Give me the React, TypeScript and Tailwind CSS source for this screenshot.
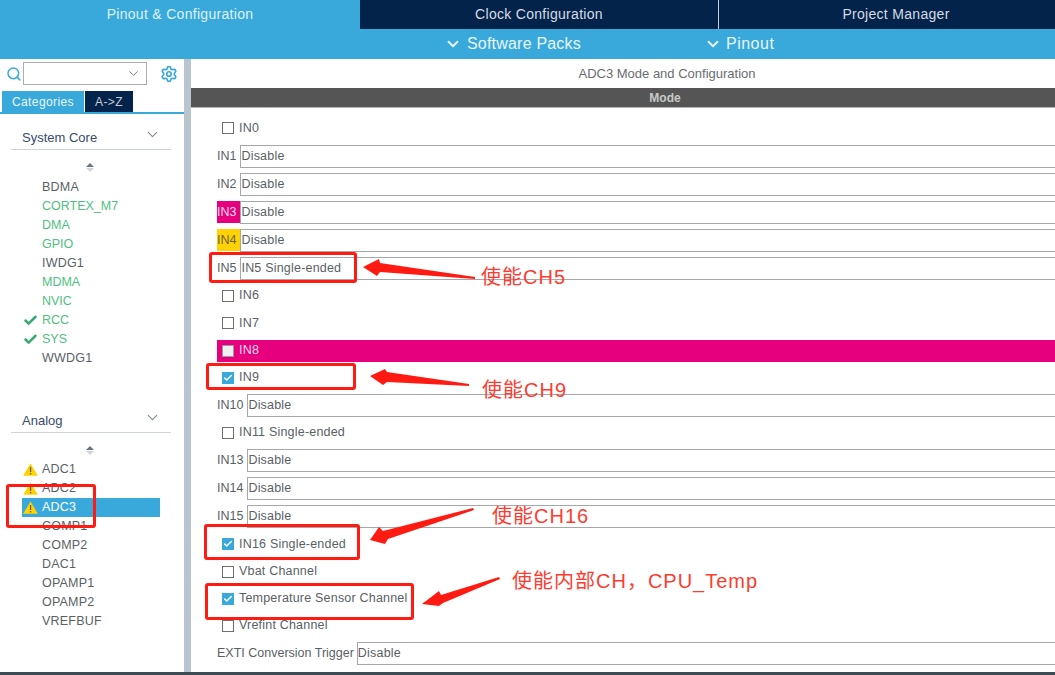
import { Check, ChevronDown, Search, Settings } from "lucide-react";

const systemCore = [
  { name: "BDMA" },
  { name: "CORTEX_M7", green: true },
  { name: "DMA", green: true },
  { name: "GPIO", green: true },
  { name: "IWDG1" },
  { name: "MDMA", green: true },
  { name: "NVIC", green: true },
  { name: "RCC", green: true, ok: true },
  { name: "SYS", green: true, ok: true },
  { name: "WWDG1" },
];

const analog = [
  { name: "ADC1", warn: true },
  { name: "ADC2", warn: true },
  { name: "ADC3", warn: true, selected: true },
  { name: "COMP1" },
  { name: "COMP2" },
  { name: "DAC1" },
  { name: "OPAMP1" },
  { name: "OPAMP2" },
  { name: "VREFBUF" },
];

type Item = { name: string; green?: boolean; ok?: boolean; warn?: boolean; selected?: boolean };

function Scroller() {
  return (
    <div className="flex h-[18px] flex-col items-center justify-center gap-px pr-[4px]">
      <div className="h-0 w-0 border-x-[4px] border-b-[4px] border-x-transparent border-b-[#6b7280]" />
      <div className="h-0 w-0 border-x-[4px] border-t-[4px] border-x-transparent border-t-[#d1d5db]" />
    </div>
  );
}

function WarnIcon() {
  return (
    <svg className="h-[13px] w-[15px]" viewBox="0 0 15 13">
      <polygon points="7.5,0.5 14.8,12.8 0.2,12.8" fill="#ffd200" />
      <rect x="6.9" y="4" width="1.3" height="5" fill="#6b5a10" />
      <rect x="6.9" y="10" width="1.3" height="1.4" fill="#6b5a10" />
    </svg>
  );
}

function Group({ title, items, listGap }: { title: string; items: Item[]; listGap: string }) {
  return (
    <div>
      <div className="ml-[11px] mr-[13px] flex h-[25px] items-end justify-between border-b border-[#cfd4d8] pl-[11px] pr-[10px] pb-[3px]">
        <span className="text-[13px] leading-[16px] text-[#3a4a6b]">{title}</span>
        <ChevronDown className="mb-[3px] h-[17px] w-[17px] text-[#7d8790]" strokeWidth={1.5} />
      </div>
      <div className="pt-[8px]">
        <Scroller />
      </div>
      <ul className={listGap}>
        {items.map((item) => (
          <li
            key={item.name}
            className={
              item.selected
                ? "ml-[22px] mr-[24px] flex h-[19px] items-center bg-[#39a9dc] text-white"
                : "ml-[22px] mr-[24px] flex h-[19px] items-center"
            }
          >
            <span className="flex w-[20px] shrink-0 justify-start pl-[1px]">
              {item.ok ? <Check className="h-[15px] w-[15px] text-[#3aa873]" strokeWidth={4} /> : null}
              {item.warn ? <WarnIcon /> : null}
            </span>
            <span
              className={
                item.selected
                  ? "text-[12.5px] tracking-[0.2px] text-white"
                  : item.green
                    ? "text-[12.5px] text-[#4fbf7f]"
                    : "text-[12.5px] tracking-[0.2px] text-[#5a5f66]"
              }
            >
              {item.name}
            </span>
          </li>
        ))}
      </ul>
    </div>
  );
}

function Sidebar() {
  return (
    <aside className="flex w-[184px] shrink-0 flex-col bg-white">
      <div className="flex h-[32px] items-center pb-[3px]">
        <Search className="ml-[6px] h-[16px] w-[16px] text-[#39a9dc]" strokeWidth={2.25} />
        <div className="ml-[1px] flex h-[23px] w-[124px] items-center justify-end border border-[#a9aeb2] pr-[5px]">
          <ChevronDown className="h-[15px] w-[15px] text-[#6b7280]" strokeWidth={1.5} />
        </div>
        <Settings className="ml-[13px] h-[18px] w-[18px] text-[#39a9dc]" strokeWidth={2.25} />
      </div>
      <div className="flex h-[21px] gap-px border-b-0 pl-[2px]">
        <div className="flex w-[82px] items-center justify-center bg-[#39a9dc] text-[12px] tracking-[0.4px] text-[#e8f5fb]">Categories</div>
        <div className="flex w-[48px] items-center justify-center bg-[#03234b] text-[12px] tracking-[0.4px] text-[#c5ced8]">A-&gt;Z</div>
      </div>
      <div className="h-[2px] bg-[#39a9dc]" />
      <div className="pt-[11px]">
        <Group title="System Core" items={systemCore} listGap="pt-[2px]" />
      </div>
      <div className="pt-[40px]">
        <Group title="Analog" items={analog} listGap="pt-[1px]" />
      </div>
    </aside>
  );
}

function Label({ text, bg }: { text: string; bg?: string }) {
  return (
    <span
      className={
        bg === "pink"
          ? "flex h-[22px] shrink-0 items-center bg-[#e6007e] pr-[4px] text-[12.5px] text-[#ffd9ec]"
          : bg === "yellow"
            ? "flex h-[22px] shrink-0 items-center bg-[#ffd200] pr-[4px] text-[12.5px] text-[#6b6440]"
            : "flex h-[22px] shrink-0 items-center pr-[4px] text-[12.5px] text-[#5a5f66]"
      }
    >
      {text}
    </span>
  );
}

function SelectRow({ label, value, bg, tight }: { label: string; value: string; bg?: string; tight?: boolean }) {
  return (
    <div className="flex h-[28px] items-center pl-[26px]">
      <Label text={label} bg={bg} />
      <div
        className={
          tight
            ? "-ml-px flex h-[23px] flex-1 items-center border border-[#a4a8ab] bg-white text-[12.5px] tracking-[0.2px] text-[#5a5f66]"
            : "flex h-[23px] flex-1 items-center border border-[#a4a8ab] bg-white text-[12.5px] tracking-[0.2px] text-[#5a5f66]"
        }
      >
        {value}
      </div>
    </div>
  );
}

function CheckRow({ label, checked, pink, tall }: { label: string; checked?: boolean; pink?: boolean; tall?: boolean }) {
  return (
    <div className={tall ? "flex h-[28px] items-center pl-[26px]" : "flex h-[27px] items-center pl-[26px]"}>
      <div className={pink ? "flex h-[22px] flex-1 items-center bg-[#e6007e] pl-[5px]" : "flex h-[22px] flex-1 items-center pl-[5px]"}>
        {checked ? (
          <span className="flex h-[12px] w-[12px] items-center justify-center bg-[#39a9dc]">
            <Check className="h-[10px] w-[10px] text-white" strokeWidth={3.5} />
          </span>
        ) : (
          <span className={pink ? "h-[12px] w-[12px] border border-[#9a9a9a] bg-[#f0f0f0]" : "h-[12px] w-[12px] border border-[#6f6f6f] bg-white"} />
        )}
        <span className={pink ? "ml-[5px] text-[12.5px] tracking-[0.2px] text-[#ffd9ec]" : "ml-[5px] text-[12.5px] tracking-[0.2px] text-[#5a5f66]"}>{label}</span>
      </div>
    </div>
  );
}

function Main() {
  return (
    <main className="flex w-[952px] shrink-0 flex-col bg-white">
      <div className="flex h-[29px] items-center justify-center text-[13px] text-[#6a6d70]">ADC3 Mode and Configuration</div>
      <div className="flex h-[20px] items-center justify-center border-b border-[#b5b5b5] bg-[#545554] pr-[4px] text-[12px] font-bold text-[#c9c9c9]">Mode</div>
      <div className="pt-[6px]">
        <CheckRow label="IN0" tall />
        <SelectRow label="IN1" value="Disable" />
        <SelectRow label="IN2" value="Disable" />
        <SelectRow label="IN3" value="Disable" bg="pink" />
        <SelectRow label="IN4" value="Disable" bg="yellow" />
        <SelectRow label="IN5" value="IN5 Single-ended" />
        <CheckRow label="IN6" />
        <CheckRow label="IN7" tall />
        <CheckRow label="IN8" pink />
        <CheckRow label="IN9" checked />
        <SelectRow label="IN10" value="Disable" />
        <CheckRow label="IN11 Single-ended" />
        <SelectRow label="IN13" value="Disable" />
        <SelectRow label="IN14" value="Disable" />
        <SelectRow label="IN15" value="Disable" />
        <CheckRow label="IN16 Single-ended" checked tall />
        <CheckRow label="Vbat Channel" />
        <CheckRow label="Temperature Sensor Channel" checked />
        <CheckRow label="Vrefint Channel" />
        <SelectRow label="EXTI Conversion Trigger" value="Disable" tight />
      </div>
    </main>
  );
}

function Annotations() {
  const box = "absolute rounded-[3px] border-[3px] border-[#ff1a12]";
  const note = "absolute whitespace-nowrap text-[20px] leading-[24px] tracking-[1px] text-[#ff3b30]";
  return (
    <>
      <div className={`${box} left-[209px] top-[252px] h-[31px] w-[148px]`} />
      <div className={`${box} left-[206px] top-[363px] h-[27px] w-[150px]`} />
      <div className={`${box} left-[204px] top-[524px] h-[36px] w-[156px]`} />
      <div className={`${box} left-[205px] top-[583px] h-[37px] w-[209px]`} />
      <div className={`${box} left-[6px] top-[484px] h-[44px] w-[90px]`} />
      <svg className="absolute left-0 top-0 h-[675px] w-[1055px]" viewBox="0 0 1055 675" fill="#ff1a12">
        <polygon points="363,267 379,259 380,263 475,277 475,279 380,272 377,276" />
        <polygon points="370,376 385,369 387,372 469,384 469,386 387,382 383,385" />
        <polygon points="370,540 379,527 383,531 473,508 474,510 388,539 385,544" />
        <polygon points="422,604 439,591 441,595 499,577 500,579 443,603 439,606" />
      </svg>
      <span className={`${note} left-[481px] top-[265px]`}>使能CH5</span>
      <span className={`${note} left-[482px] top-[378px]`}>使能CH9</span>
      <span className={`${note} left-[492px] top-[504px]`}>使能CH16</span>
      <span className={`${note} left-[512px] top-[569px]`}>使能内部CH，CPU_Temp</span>
    </>
  );
}

export default function App() {
  return (
    <div
      className="relative flex h-[675px] w-[1055px] flex-col overflow-hidden bg-white"
      style={{ fontFamily: '"Liberation Sans", "Noto Sans CJK SC", sans-serif' }}
    >
      <nav className="flex h-[29px] shrink-0 text-[14px] tracking-[0.3px]">
        <div className="flex w-[360px] shrink-0 items-center justify-center bg-[#39a9dc] text-[#dff1fa]">Pinout &amp; Configuration</div>
        <div className="flex w-[358px] shrink-0 items-center justify-center bg-[#03234b] text-[#d5dbe3]">Clock Configuration</div>
        <div className="flex w-[355px] shrink-0 items-center justify-center border-l border-[#c7ced6] bg-[#03234b] text-[#d5dbe3]">Project Manager</div>
      </nav>
      <div className="flex h-[30px] shrink-0 items-center bg-[#39a9dc] pl-[444px] text-[16px] tracking-[0.2px] text-[#e8f5fb]">
        <ChevronDown className="h-[18px] w-[18px]" strokeWidth={2.5} />
        <span className="ml-[5px]">Software Packs</span>
        <ChevronDown className="ml-[123px] h-[18px] w-[18px]" strokeWidth={2.5} />
        <span className="ml-[4px] tracking-[0.5px]">Pinout</span>
      </div>
      <div className="flex min-h-0 flex-1">
        <Sidebar />
        <div className="w-[7px] shrink-0 bg-[#b8c5cf]" />
        <Main />
      </div>
      <div className="h-[3px] shrink-0 bg-[#3f4b52]" />
      <Annotations />
    </div>
  );
}
